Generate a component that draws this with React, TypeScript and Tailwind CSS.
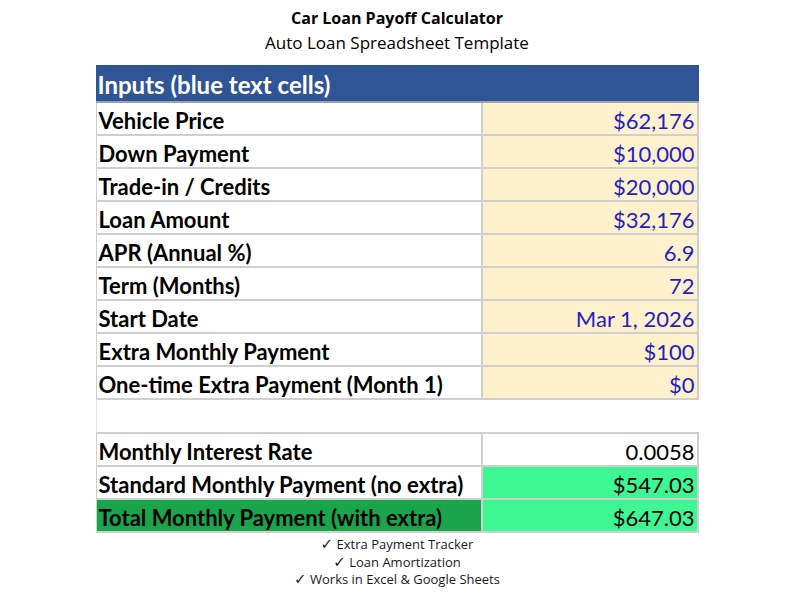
const inputs = [
  { label: 'Vehicle Price', value: '$62,176' },
  { label: 'Down Payment', value: '$10,000' },
  { label: 'Trade-in / Credits', value: '$20,000' },
  { label: 'Loan Amount', value: '$32,176' },
  { label: 'APR (Annual %)', value: '6.9' },
  { label: 'Term (Months)', value: '72' },
  { label: 'Start Date', value: 'Mar 1, 2026' },
  { label: 'Extra Monthly Payment', value: '$100' },
  { label: 'One-time Extra Payment (Month 1)', value: '$0' },
]

const features = ['Extra Payment Tracker', 'Loan Amortization', 'Works in Excel & Google Sheets']

function Row({
  label,
  value,
  labelClass = 'bg-white text-black',
  valueClass = 'bg-white text-black',
}: {
  label: string
  value: string
  labelClass?: string
  valueClass?: string
}) {
  return (
    <div className="flex h-[33px] border-b-2 border-[#cfcfcf]">
      <div
        className={`w-[386px] flex items-center pl-[2px] pt-[4px] border-r-2 border-[#cfcfcf] font-bold text-[22px] ${labelClass}`}
      >
        {label}
      </div>
      <div className={`flex-1 flex items-center justify-end pr-[2px] pt-[4px] text-[22px] ${valueClass}`}>{value}</div>
    </div>
  )
}

export default function App() {
  return (
    <div className="w-[794px] h-[596px] bg-white flex flex-col items-center font-['Lato',sans-serif] text-black">
      {/* Title */}
      <h1 className="mt-[8px] text-[16px] leading-[21px] font-bold font-['Open_Sans',sans-serif]">
        Car Loan Payoff Calculator
      </h1>
      <p className="mt-[2px] text-[17px] leading-[23px] font-['Open_Sans',sans-serif]">Auto Loan Spreadsheet Template</p>

      {/* Sheet */}
      <div className="mt-[11px] w-[603px] font-['Lato',sans-serif]">
        <div className="h-[38px] bg-[#2f5597] flex items-center pl-[2px] pt-[4px] text-white font-bold text-[24px] border-b-2 border-[#9aa3b0]">
          Inputs (blue text cells)
        </div>
        <div className="border-l border-r-2 border-[#cfcfcf]">
          {inputs.map((r) => (
            <Row key={r.label} label={r.label} value={r.value} valueClass="bg-[#fff1cc] text-[#1f1fc8]" />
          ))}
        </div>
        <div className="h-[32px] border-l border-[#e4e4e4]" />
        <div className="border-t-2 border-l border-r-2 border-[#cfcfcf]">
          <Row label="Monthly Interest Rate" value="0.0058" />
          <Row label="Standard Monthly Payment (no extra)" value="$547.03" valueClass="bg-[#3cf793] text-black" />
          <Row
            label="Total Monthly Payment (with extra)"
            value="$647.03"
            labelClass="bg-[#1aa54c] text-black"
            valueClass="bg-[#3cf793] text-black"
          />
        </div>
      </div>

      {/* Features */}
      <div className="mt-[3px] flex flex-col items-center text-[13px] leading-[17.5px] font-['Open_Sans',sans-serif] text-[#1a1a1a]">
        {features.map((f) => (
          <div key={f}>
            <span className="font-['DejaVu_Sans',sans-serif] text-[15px] font-bold">✓</span> {f}
          </div>
        ))}
      </div>
    </div>
  )
}
